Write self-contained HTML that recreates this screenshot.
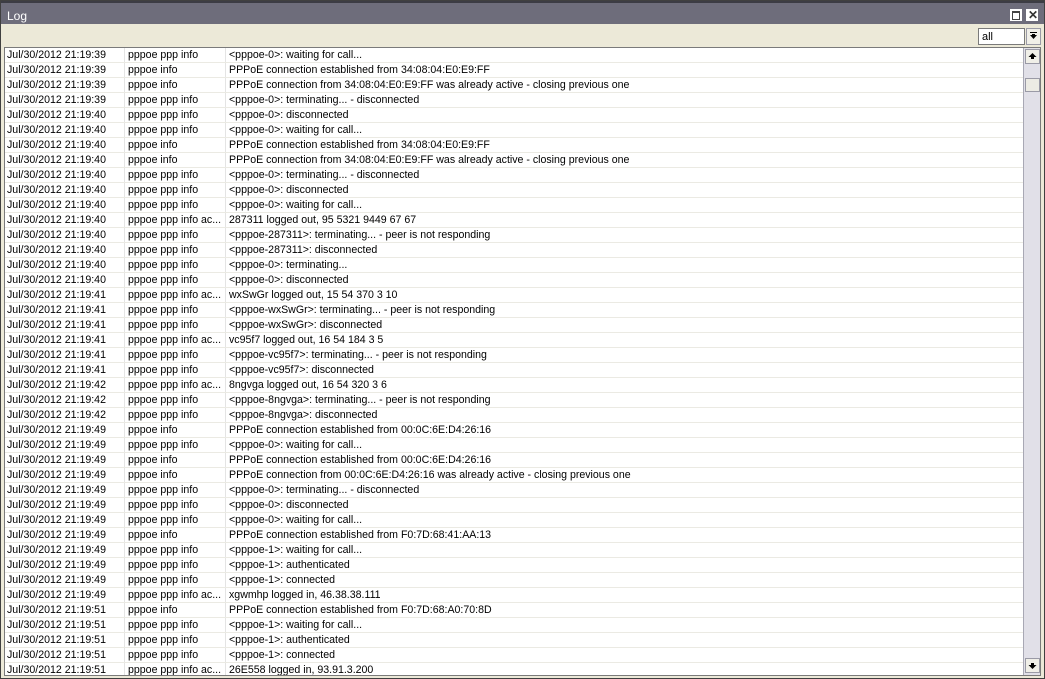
<!DOCTYPE html>
<html><head><meta charset="utf-8"><style>
html,body{margin:0;padding:0;width:1045px;height:679px;overflow:hidden;background:#ece9d8;font-family:"Liberation Sans",Arial,sans-serif;font-size:10.6px;color:#000}
#win{position:absolute;left:0;top:0;width:1043px;height:677px;border:1px solid #404040;background:#ece9d8}
#title{position:absolute;left:0;top:0;width:1043px;height:23px;background:#6e6d7b;color:#fff;font-size:12px;line-height:27px;text-indent:6px;border-top:2px solid #3c3c44;box-sizing:border-box}
.tb{position:absolute;top:6px;width:12px;height:12px;background:#fff}
#list{position:absolute;left:3px;top:46px;width:1037px;height:629px;border:1px solid #7a7a7a;background:#fff;overflow:hidden;box-sizing:border-box}
.r{position:absolute;left:0;width:1018px;height:15px;border-bottom:1px solid #ebeae3;box-sizing:border-box;line-height:15px;white-space:nowrap}
.r span{position:absolute;top:0}
.c1{left:2px}.c2{left:123px}.c3{left:224px}
.sep{position:absolute;top:0;width:1px;height:629px;background:#e4e4e4}
#sb{position:absolute;left:1018px;top:0;width:17px;height:627px;background:#e1e0e8;border-left:1px solid #a8a8b4}
.btn{position:absolute;left:1px;width:15px;height:15px;background:#f0efe8;border:1px solid #9a9aa6;box-sizing:border-box}
#sel{position:absolute;left:977px;top:27px;width:47px;height:17px;background:#fff;border:1px solid #7a7a7a;box-sizing:border-box;line-height:17px;text-indent:3px;font-size:11px}
#selb{position:absolute;left:1025px;top:27px;width:15px;height:17px;background:#f0efe8;border:1px solid #9a9aa6;box-sizing:border-box}
</style></head><body>
<div id="win">
<div id="title">Log
<div class="tb" style="left:1009px"><div style="position:absolute;left:2px;top:2px;width:6px;height:6px;border:1px solid #444;border-top-width:2px"></div></div>
<div class="tb" style="left:1025px;font-size:12px;line-height:12px;text-indent:2px;color:#333;font-weight:bold">✕</div>
</div>
<div id="sel">all</div>
<div id="selb"><svg width="13" height="15" viewBox="0 0 13 15"><rect x="3" y="3" width="7" height="1" fill="#000"/><path d="M3 6h7l-3.5 4z M5 5h3v2h-3z" fill="#000"/></svg></div>
<div id="list">
<div class="sep" style="left:119px"></div><div class="sep" style="left:220px"></div>
<div id="rows"></div>
<div id="sb">
<div class="btn" style="top:1px"><svg width="13" height="13" viewBox="0 0 13 13"><path d="M6.5 3l4 4h-2.5v2h-3v-2h-2.5z" fill="#000"/></svg></div>
<div class="btn" style="top:30px;height:14px;background:#ecebe4"></div>
<div class="btn" style="top:610px"><svg width="13" height="13" viewBox="0 0 13 13"><path d="M6.5 10l4-4h-2.5v-2h-3v2h-2.5z" fill="#000"/></svg></div>
</div>
</div>
</div>
<script>
var d=[
["39","pppoe ppp info","<pppoe-0>: waiting for call..."],
["39","pppoe info","PPPoE connection established from 34:08:04:E0:E9:FF"],
["39","pppoe info","PPPoE connection from 34:08:04:E0:E9:FF was already active - closing previous one"],
["39","pppoe ppp info","<pppoe-0>: terminating... - disconnected"],
["40","pppoe ppp info","<pppoe-0>: disconnected"],
["40","pppoe ppp info","<pppoe-0>: waiting for call..."],
["40","pppoe info","PPPoE connection established from 34:08:04:E0:E9:FF"],
["40","pppoe info","PPPoE connection from 34:08:04:E0:E9:FF was already active - closing previous one"],
["40","pppoe ppp info","<pppoe-0>: terminating... - disconnected"],
["40","pppoe ppp info","<pppoe-0>: disconnected"],
["40","pppoe ppp info","<pppoe-0>: waiting for call..."],
["40","pppoe ppp info ac...","287311 logged out, 95 5321 9449 67 67"],
["40","pppoe ppp info","<pppoe-287311>: terminating... - peer is not responding"],
["40","pppoe ppp info","<pppoe-287311>: disconnected"],
["40","pppoe ppp info","<pppoe-0>: terminating..."],
["40","pppoe ppp info","<pppoe-0>: disconnected"],
["41","pppoe ppp info ac...","wxSwGr logged out, 15 54 370 3 10"],
["41","pppoe ppp info","<pppoe-wxSwGr>: terminating... - peer is not responding"],
["41","pppoe ppp info","<pppoe-wxSwGr>: disconnected"],
["41","pppoe ppp info ac...","vc95f7 logged out, 16 54 184 3 5"],
["41","pppoe ppp info","<pppoe-vc95f7>: terminating... - peer is not responding"],
["41","pppoe ppp info","<pppoe-vc95f7>: disconnected"],
["42","pppoe ppp info ac...","8ngvga logged out, 16 54 320 3 6"],
["42","pppoe ppp info","<pppoe-8ngvga>: terminating... - peer is not responding"],
["42","pppoe ppp info","<pppoe-8ngvga>: disconnected"],
["49","pppoe info","PPPoE connection established from 00:0C:6E:D4:26:16"],
["49","pppoe ppp info","<pppoe-0>: waiting for call..."],
["49","pppoe info","PPPoE connection established from 00:0C:6E:D4:26:16"],
["49","pppoe info","PPPoE connection from 00:0C:6E:D4:26:16 was already active - closing previous one"],
["49","pppoe ppp info","<pppoe-0>: terminating... - disconnected"],
["49","pppoe ppp info","<pppoe-0>: disconnected"],
["49","pppoe ppp info","<pppoe-0>: waiting for call..."],
["49","pppoe info","PPPoE connection established from F0:7D:68:41:AA:13"],
["49","pppoe ppp info","<pppoe-1>: waiting for call..."],
["49","pppoe ppp info","<pppoe-1>: authenticated"],
["49","pppoe ppp info","<pppoe-1>: connected"],
["49","pppoe ppp info ac...","xgwmhp logged in, 46.38.38.111"],
["51","pppoe info","PPPoE connection established from F0:7D:68:A0:70:8D"],
["51","pppoe ppp info","<pppoe-1>: waiting for call..."],
["51","pppoe ppp info","<pppoe-1>: authenticated"],
["51","pppoe ppp info","<pppoe-1>: connected"],
["51","pppoe ppp info ac...","26E558 logged in, 93.91.3.200"]];
var h="";
function esc(s){return s.replace(/</g,"&lt;").replace(/>/g,"&gt;");}
for(var i=0;i<d.length;i++){h+='<div class="r" style="top:'+(i*15)+'px"><span class="c1">Jul/30/2012 21:19:'+d[i][0]+'</span><span class="c2">'+d[i][1]+'</span><span class="c3">'+esc(d[i][2])+'</span></div>';}
document.getElementById("rows").innerHTML=h;
</script>
</body></html>
